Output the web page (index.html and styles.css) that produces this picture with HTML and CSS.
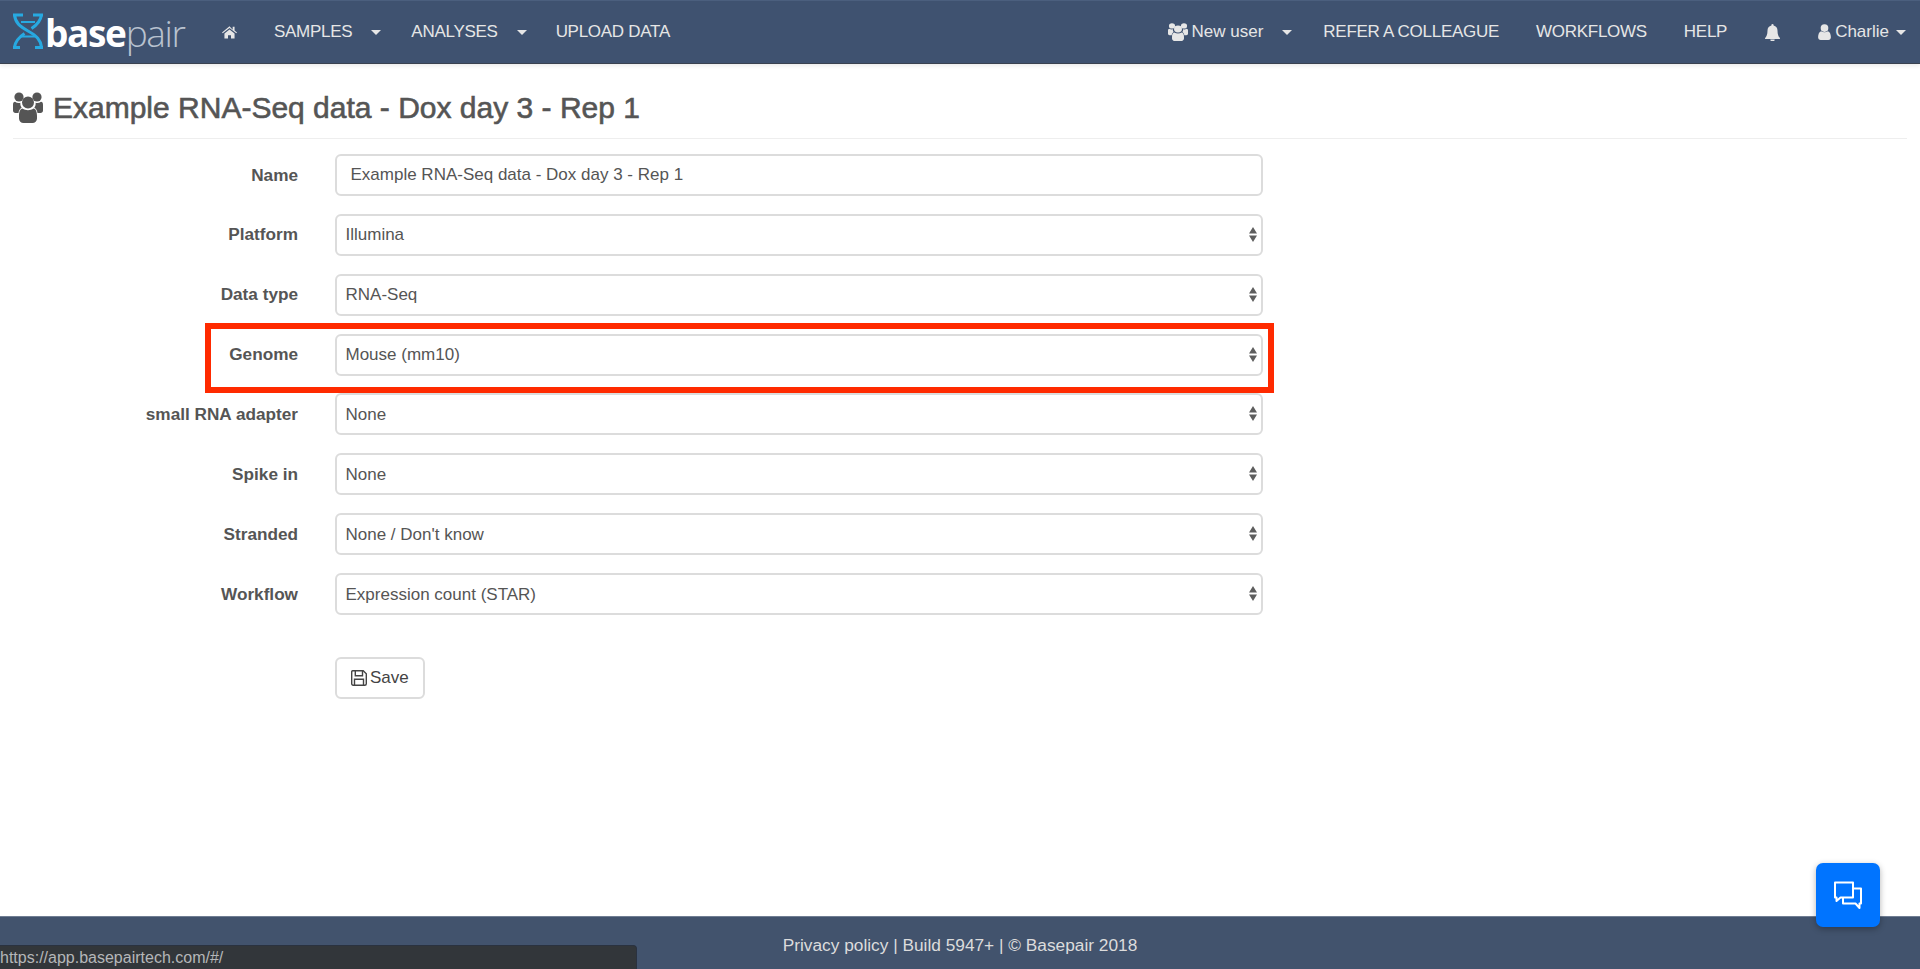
FILE: index.html
```html
<!DOCTYPE html>
<html lang="en">
<head>
<meta charset="utf-8">
<title>Basepair</title>
<link rel="stylesheet" href="styles.css">
</head>
<body>
<header class="navbar">
  <a class="brand" href="#">
    <svg class="brand-mark" viewBox="0 0 30 36" fill="none" stroke="#27a9e1" stroke-width="3">
      <path d="M0 2h10M20 2h10M1.500 2c1 8 5 11 13.500 16 9 5 12.500 9 13.500 16M28.500 2c-1 6.500-4.500 10-10 13.500M11.500 20.500C5.500 24.500 2.500 28 1.500 34M0 34.500h7M22 34.500h8"/>
      <path d="M8 9h14M8 23.500h14" stroke-width="2"/>
    </svg>
    <span class="brand-base">base</span><span class="brand-pair">pair</span>
  </a>
  <nav class="nav-left">
    <a class="nav-link home" href="#"><svg class="icon i-home" viewBox="0 0 16 14"><path d="M8 .8 0 7.400l.8 1L8 2.600l7.200 5.800.8-1-2.600-2.100V1.400h-2v3.200zM2.600 8.600V14h3.800v-3.600h3.200V14h3.800V8.600L8 4.200z"/></svg></a>
    <a class="nav-link caps samples" href="#">SAMPLES<span class="caret wide"></span></a>
    <a class="nav-link caps analyses" href="#">ANALYSES<span class="caret wide"></span></a>
    <a class="nav-link caps upload" href="#">UPLOAD DATA</a>
  </nav>
  <nav class="nav-right">
    <a class="nav-link newuser" href="#"><svg class="icon i-users"><use href="#users"/></svg>New user<span class="caret wide"></span></a>
    <a class="nav-link caps refer" href="#">REFER A COLLEAGUE</a>
    <a class="nav-link caps workflows" href="#">WORKFLOWS</a>
    <a class="nav-link caps help" href="#">HELP</a>
    <a class="nav-link bell" href="#"><svg class="icon i-bell" viewBox="0 0 14 16"><path d="M7 0a1.100 1.100 0 0 0-1 1.300C3.600 1.800 2.300 3.700 2.300 6c0 4-1 5.700-2.300 7.200v.8h14v-.8C12.700 11.700 11.700 10 11.700 6c0-2.300-1.300-4.200-3.700-4.700A1.100 1.100 0 0 0 7 0zM5 14.700a2 2 0 0 0 4 0z"/></svg></a>
    <a class="nav-link charlie" href="#"><svg class="icon i-user" viewBox="0 0 12 15"><circle cx="6" cy="3.800" r="3.600"/><path d="M0 12.500C0 9.500 1 7.500 2.800 6.800c1.800 1.300 4.600 1.300 6.400 0C11 7.500 12 9.500 12 12.500c0 1.500-1 2.500-2.400 2.500H2.400C1 15 0 14 0 12.500z"/></svg>Charlie<span class="caret"></span></a>
  </nav>
</header>

<svg class="defs" width="0" height="0" aria-hidden="true">
  <symbol id="users" viewBox="0 0 30 31" preserveAspectRatio="none">
    <circle cx="15" cy="10.500" r="6"/><circle cx="6" cy="5" r="4.600"/><circle cx="24" cy="5" r="4.600"/>
    <path d="M6 24c0-4 1-7 3.500-7.500 3 2.300 8 2.300 11 0 2.500.5 3.500 3.500 3.500 7.500v2.500c0 2.500-2 4.500-4.500 4.500h-9C8 31 6 29 6 26.500z"/>
    <path d="M0 13c0-2 .7-3.200 2-3.200 1.700 1.300 3.700 1.500 5.400 1-.3 1.800.2 3.500 1.300 4.700-1.600 1-3 3-3.200 5.500H2.500C1 21 0 20 0 18.500zM30 13c0-2-.7-3.200-2-3.200-1.700 1.300-3.700 1.500-5.400 1 .3 1.800-.2 3.500-1.300 4.700 1.600 1 3 3 3.200 5.500h3C29 21 30 20 30 18.500z"/>
  </symbol>
</svg>

<main class="page">
  <h1 class="title"><svg class="icon i-title"><use href="#users"/></svg>Example RNA-Seq data - Dox day 3 - Rep 1</h1>
  <form class="form">
    <div class="row">
      <label class="label">Name</label>
      <input class="control text-input" type="text" value="Example RNA-Seq data - Dox day 3 - Rep 1">
    </div>
    <div class="row">
      <label class="label">Platform</label>
      <div class="select-wrap"><select class="control"><option>Illumina</option></select><svg class="updown" viewBox="0 0 8 15"><path d="M4 0l4 6.500H0zM4 15 0 8.500h8z"/></svg></div>
    </div>
    <div class="row">
      <label class="label">Data type</label>
      <div class="select-wrap"><select class="control"><option>RNA-Seq</option></select><svg class="updown" viewBox="0 0 8 15"><path d="M4 0l4 6.500H0zM4 15 0 8.500h8z"/></svg></div>
    </div>
    <div class="row">
      <label class="label">Genome</label>
      <div class="select-wrap"><select class="control"><option>Mouse (mm10)</option></select><svg class="updown" viewBox="0 0 8 15"><path d="M4 0l4 6.500H0zM4 15 0 8.500h8z"/></svg></div>
      <span class="red-box"></span>
    </div>
    <div class="row">
      <label class="label">small RNA adapter</label>
      <div class="select-wrap"><select class="control"><option>None</option></select><svg class="updown" viewBox="0 0 8 15"><path d="M4 0l4 6.500H0zM4 15 0 8.500h8z"/></svg></div>
    </div>
    <div class="row">
      <label class="label">Spike in</label>
      <div class="select-wrap"><select class="control"><option>None</option></select><svg class="updown" viewBox="0 0 8 15"><path d="M4 0l4 6.500H0zM4 15 0 8.500h8z"/></svg></div>
    </div>
    <div class="row">
      <label class="label">Stranded</label>
      <div class="select-wrap"><select class="control"><option>None / Don't know</option></select><svg class="updown" viewBox="0 0 8 15"><path d="M4 0l4 6.500H0zM4 15 0 8.500h8z"/></svg></div>
    </div>
    <div class="row">
      <label class="label">Workflow</label>
      <div class="select-wrap"><select class="control"><option>Expression count (STAR)</option></select><svg class="updown" viewBox="0 0 8 15"><path d="M4 0l4 6.500H0zM4 15 0 8.500h8z"/></svg></div>
    </div>
    <div class="row actions">
      <button class="save" type="button"><svg class="i-save" viewBox="0 0 16 16" fill="none" stroke="#444" stroke-width="1.400"><path d="M1.700.7h10.500l3.100 3.100v10c0 .8-.6 1.500-1.500 1.500H2.200c-.9 0-1.500-.7-1.500-1.500V2.200C.7 1.300.9.700 1.700.7z"/><path d="M4.300 1v4.700h7.200V1M3.500 15V9.300h9V15"/></svg>Save</button>
    </div>
  </form>
</main>

<footer class="footer">Privacy policy | Build 5947+ | © Basepair 2018</footer>

<div class="status-bubble">https://app.basepairtech.com/#/</div>
<button class="chat" type="button" aria-label="Chat">
  <svg viewBox="0 0 32 32" fill="none" stroke="#fff" stroke-width="2" stroke-linejoin="round"><path d="M3 3.500h18v15H8.500L4.500 22v-3.500H3z"/><path d="M21 9.500h8v15h-1.500V29l-4-4.500H11v-6"/></svg>
</button>
</body>
</html>
```

FILE: styles.css
```css
* { box-sizing: border-box; }
html, body { height: 100%; }
body {
  margin: 0;
  display: flex;
  flex-direction: column;
  min-height: 100vh;
  background: #fff;
  color: #555;
  font-family: "Liberation Sans", Arial, sans-serif;
  font-size: 17px;
  overflow: hidden;
}
.defs { position: absolute; }
.navbar {
  flex: none;
  height: 64px;
  display: flex;
  align-items: center;
  justify-content: space-between;
  background: #3f5270;
  border-top: 1px solid #4b5f7e;
  border-bottom: 1px solid #3a4250;
  box-shadow: 0 2px 4px rgba(0,0,0,.08);
}
.brand {
  display: flex;
  flex: none;
  align-items: baseline;
  width: 172px;
  margin-left: 13px;
  text-decoration: none;
  font-family: "Open Sans", sans-serif;
  font-size: 37px;
  line-height: 1;
  letter-spacing: -1.35px;
}
.brand-mark { width: 30px; height: 36px; margin-right: 2px; align-self: center; margin-top: -3px; flex: none; }
.brand-base { color: #fff; font-weight: 700; }
.brand-pair { color: #b9c2cf; font-weight: 300; }
.nav-left, .nav-right { display: flex; align-items: center; }
.nav-link {
  display: flex;
  align-items: center;
  color: #e6e6e6;
  text-decoration: none;
  font-size: 17px;
  line-height: 20px;
  white-space: nowrap;
}
.caps { letter-spacing: -.28px; }
.nav-left { margin-left: 37px; margin-right: auto; }
.nav-right { margin-right: 14px; }
.samples { margin-left: 37px; }
.analyses { margin-left: 30px; }
.upload { margin-left: 29px; }
.refer { margin-left: 31px; }
.workflows { margin-left: 37px; }
.help { margin-left: 37px; }
.bell { margin-left: 38px; }
.charlie { margin-left: 38px; }
.icon { fill: #e6e6e6; flex: none; }
.i-home { width: 15px; height: 14px; }
.i-users { width: 20px; height: 18px; margin-right: 4px; }
.i-bell { width: 15px; height: 17px; }
.i-user { width: 13px; height: 16px; margin-right: 4px; }
.caret {
  width: 0; height: 0;
  margin-left: 7px;
  border-left: 5px solid transparent;
  border-right: 5px solid transparent;
  border-top: 5px solid #e6e6e6;
}
.caret.wide { margin-left: 19px; }
.page { flex: 1; padding: 0 13px; min-height: 0; }
.title {
  margin: 0;
  height: 75px;
  padding-top: 13px;
  display: flex;
  align-items: center;
  color: #555;
  font-size: 30px;
  font-weight: 400;
  -webkit-text-stroke: .6px #555;
  border-bottom: 1px solid #eee;
}
.i-title { width: 30px; height: 31px; margin-right: 10px; fill: #555; }
.form { padding-top: 15px; }
.row {
  position: relative;
  display: flex;
  align-items: center;
  height: 42px;
  margin-bottom: 17.86px;
}
.label {
  width: 285px;
  text-align: right;
  font-weight: 700;
  font-size: 17.2px;
  color: #555;
}
.select-wrap { position: relative; margin-left: 37px; width: 928px; height: 42px; }
.control {
  display: block;
  width: 100%;
  height: 42px;
  border: 2px solid #dcdcdc;
  border-radius: 6px;
  background: #fff;
  color: #555;
  font-family: inherit;
  font-size: 17px;
  padding: 0 8.5px;
  appearance: none;
  outline: none;
}
.text-input { margin-left: 37px; width: 928px; padding: 0 13.5px; }
.updown { position: absolute; right: 6px; top: 13px; width: 8px; height: 15px; fill: #5e5e5e; }
.red-box {
  position: absolute;
  left: 192px;
  top: -11px;
  width: 1069px;
  height: 70px;
  border: 6px solid #ff2a00;
  pointer-events: none;
}
.actions { margin-top: 42px; padding-left: 322px; }
.save {
  display: flex;
  align-items: center;
  width: 90px;
  height: 42px;
  padding: 0 14px;
  border: 2px solid #dcdcdc;
  border-radius: 6px;
  background: #fff;
  color: #444;
  font-family: inherit;
  font-size: 17px;
}
.i-save { width: 16px; height: 16px; margin-right: 3px; flex: none; }
.footer {
  flex: none;
  height: 53px;
  display: flex;
  align-items: center;
  justify-content: center;
  background: #42536d;
  border-top: 1px solid #707e93;
  color: #dcdcdc;
  font-size: 17.3px;
  padding-top: 4px;
}
.status-bubble {
  position: fixed;
  left: 0;
  bottom: 0;
  width: 637px;
  height: 24px;
  background: #32363a;
  border: 1px solid #2a3240;
  border-left: 0;
  border-bottom: 0;
  border-top-right-radius: 4px;
  color: #b5b7b9;
  font-size: 16px;
  line-height: 23px;
}
.chat {
  position: fixed;
  left: 1816px;
  top: 863px;
  width: 64px;
  height: 64px;
  padding: 16px;
  border: 0;
  border-radius: 7px;
  background: #0074ff;
  box-shadow: 0 2px 6px rgba(0,0,0,.3);
}
.chat svg { display: block; width: 32px; height: 32px; }
```
